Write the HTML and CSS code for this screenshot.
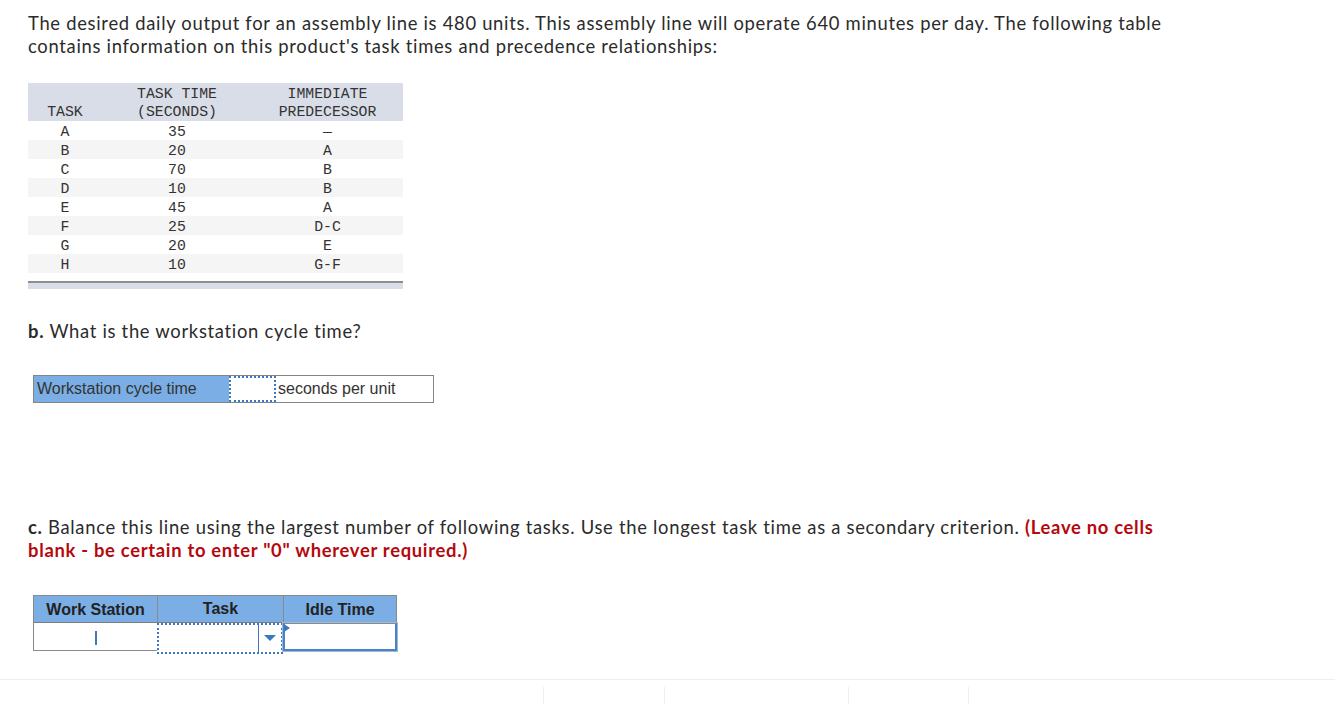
FILE: index.html
```html
<!DOCTYPE html>
<html>
<head>
<meta charset="utf-8">
<link rel="stylesheet" href="styles.css">
</head>
<body>
<div class="content">
  <p class="intro">The desired daily output for an assembly line is 480 units. This assembly line will operate 640 minutes per day. The following table contains information on this product's task times and precedence relationships:</p>

  <div class="data">
    <table class="tasks">
      <thead>
        <tr><th class="c1">TASK</th><th class="c2">TASK TIME<br>(SECONDS)</th><th class="c3">IMMEDIATE<br>PREDECESSOR</th></tr>
      </thead>
      <tbody>
        <tr><td>A</td><td>35</td><td>&#8212;</td></tr>
        <tr class="alt"><td>B</td><td>20</td><td>A</td></tr>
        <tr><td>C</td><td>70</td><td>B</td></tr>
        <tr class="alt"><td>D</td><td>10</td><td>B</td></tr>
        <tr><td>E</td><td>45</td><td>A</td></tr>
        <tr class="alt"><td>F</td><td>25</td><td>D-C</td></tr>
        <tr><td>G</td><td>20</td><td>E</td></tr>
        <tr class="alt"><td>H</td><td>10</td><td>G-F</td></tr>
      </tbody>
    </table>
    <div class="data-foot"></div>
  </div>

  <p class="question q-b"><b>b.</b> What is the workstation cycle time?</p>

  <div class="answer-row">
    <div class="lbl">Workstation cycle time</div>
    <div class="inp"></div>
    <div class="unit">seconds per unit</div>
  </div>

  <p class="question q-c"><b>c.</b> Balance this line using the largest number of following tasks. Use the longest task time as a secondary criterion. <b class="warn">(Leave no cells blank - be certain to enter "0" wherever required.)</b></p>

  <div class="balance">
    <div class="bh ws">Work Station</div>
    <div class="bh tk">Task</div>
    <div class="bh it">Idle Time</div>
    <div class="bc ws-cell"><span class="ibeam"></span></div>
    <div class="bc tk-cell"><span class="dd"><span class="arrow"></span></span></div>
    <div class="bc it-cell"><span class="mark"></span></div>
  </div>
</div>

<div class="footer">
  <div class="footer-lines">
    <span class="vl"></span><span class="vl v2"></span><span class="vl v3"></span><span class="vl v4"></span>
  </div>
</div>
</body>
</html>
```

FILE: styles.css
```css
html, body {
  margin: 0;
  padding: 0;
  background: #fff;
}
body {
  font-family: Lato, "Open Sans", sans-serif;
  color: #2b2b2b;
}
.content {
  padding: 12px 0 0 28px;
  width: 1170px;
  height: 667px;
}
.intro {
  margin: 0;
  font-size: 18.4px;
  letter-spacing: 0.7px;
  line-height: 23px;
}
.data {
  margin-top: 25px;
  width: 375px;
}
.tasks {
  border-collapse: collapse;
  width: 375px;
  font-family: "Liberation Mono", "DejaVu Sans Mono", monospace;
  font-size: 14.8px;
  color: #333;
}
.tasks th {
  background: #d9dde7;
  font-weight: normal;
  line-height: 18px;
  padding: 2px 0 0;
  vertical-align: bottom;
  text-align: center;
}
.tasks th.c1 { width: 74px; }
.tasks th.c2 { width: 150px; }
.tasks td {
  padding: 3px 0 0;
  height: 16px;
  line-height: 16px;
  text-align: center;
}
.tasks tr.alt td { background: #f5f5f5; }
.data-foot {
  margin-top: 8px;
  height: 6px;
  border-top: 2px solid #8e8e8e;
  background: #d9dde7;
}
.question {
  margin: 0;
  font-size: 18.4px;
  letter-spacing: 0.7px;
  line-height: 23px;
}
.q-b { margin-top: 31px; }
.answer-row {
  margin: 32px 0 0 5px;
  display: flex;
  width: 401px;
  height: 28px;
  box-sizing: border-box;
  border: 1px solid #858585;
  font-family: "Liberation Sans", Arial, sans-serif;
  font-size: 16px;
  color: #333;
}
.lbl {
  width: 195px;
  background: #7aaee4;
  padding-left: 3px;
  line-height: 26px;
  box-sizing: border-box;
}
.inp {
  width: 47px;
  border: 2px dotted #3b78c2;
  box-sizing: border-box;
}
.unit {
  flex: 1;
  padding-left: 2px;
  line-height: 26px;
}
.q-c { margin-top: 113px; }
.warn { color: #b5080d; }
.balance {
  margin: 33px 0 0 5px;
  display: grid;
  grid-template-columns: 124px 126px 114px;
  grid-template-rows: 28px 28px;
  width: 364px;
  font-family: "Liberation Sans", Arial, sans-serif;
  font-size: 16px;
  color: #222;
}
.bh {
  background: #7aaee4;
  font-weight: bold;
  text-align: center;
  line-height: 25px;
  border-top: 1px solid #8a8a8a;
  border-left: 1px solid #8a8a8a;
  border-bottom: 1px solid #7d7d7d;
}
.bh.ws { line-height: 27px; }
.bh.it { border-right: 1px solid #8a8a8a; line-height: 27px; }
.bc { position: relative; background: #fff; }
.ws-cell {
  border-left: 1px solid #8a8a8a;
  border-bottom: 1px solid #8a8a8a;
  display: flex;
  justify-content: center;
  align-items: center;
}
.ibeam {
  width: 2px;
  height: 14px;
  background: #3f78b8;
  margin-top: 2px;
}
.tk-cell {
  border: 2px dotted #3b78c2;
  margin-bottom: -3px;
}
.dd {
  position: absolute;
  right: 0;
  top: 0;
  bottom: 0;
  width: 22px;
  border-left: 1px solid #3b78c2;
}
.arrow {
  position: absolute;
  left: 5px;
  top: 10px;
  border-left: 6px solid transparent;
  border-right: 6px solid transparent;
  border-top: 6px solid #3b78c2;
}
.it-cell {
  border: 2px solid #4a82c8;
  border-top: 1px solid #8a8a8a;
  outline: 1px solid #9fb8d6;
}
.mark {
  position: absolute;
  left: -1px;
  top: 0;
  border-top: 4px solid transparent;
  border-bottom: 4px solid transparent;
  border-left: 6px solid #3b78c2;
}
.footer {
  border-top: 1px solid #efefef;
  height: 36px;
  box-sizing: border-box;
  padding-top: 7px;
}
.footer-lines {
  display: flex;
  height: 29px;
}
.vl {
  width: 1px;
  height: 100%;
  background: #eeeeee;
  margin-left: 543px;
}
.vl.v2 { margin-left: 120px; }
.vl.v3 { margin-left: 183px; }
.vl.v4 { margin-left: 119px; }
```
